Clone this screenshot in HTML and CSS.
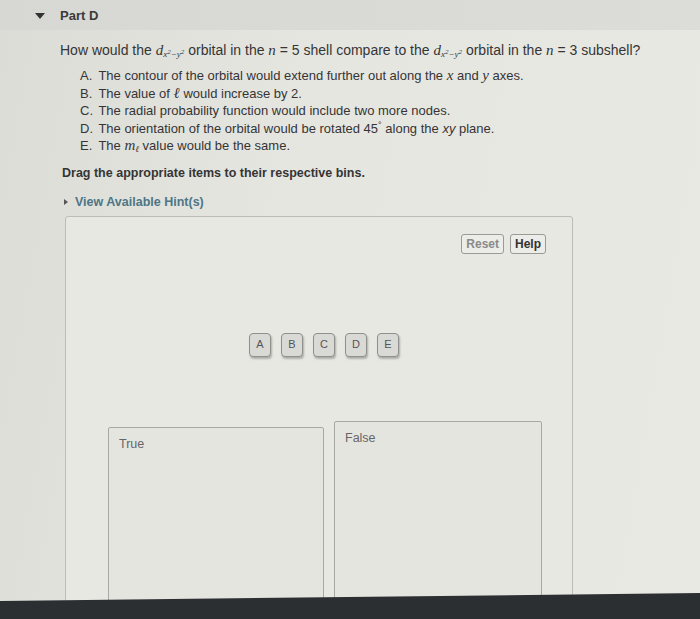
FILE: index.html
```html
<!DOCTYPE html>
<html>
<head>
<meta charset="utf-8">
<link rel="stylesheet" href="styles.css">
</head>
<body>
<div class="screen">
  <div class="header">
    <span class="caret"></span>
    <span class="part">Part D</span>
  </div>
  <div class="content">
    <p class="question">How would the <span class="math">d<sub>x<sup>2</sup>−y<sup>2</sup></sub></span> orbital in the <span class="math">n</span> = 5 shell compare to the <span class="math">d<sub>x<sup>2</sup>−y<sup>2</sup></sub></span> orbital in the <span class="math">n</span> = 3 subshell?</p>
    <ol class="options">
      <li><span class="lbl">A.</span> The contour of the orbital would extend further out along the <span class="math">x</span> and <span class="math">y</span> axes.</li>
      <li><span class="lbl">B.</span> The value of <span class="math">ℓ</span> would increase by 2.</li>
      <li><span class="lbl">C.</span> The radial probability function would include two more nodes.</li>
      <li><span class="lbl">D.</span> The orientation of the orbital would be rotated 45<sup>°</sup> along the <i>xy</i> plane.</li>
      <li><span class="lbl">E.</span> The <span class="math">m<sub>ℓ</sub></span> value would be the same.</li>
    </ol>
    <p class="instr">Drag the appropriate items to their respective bins.</p>
    <p class="hint"><span class="tri"></span>View Available Hint(s)</p>
    <div class="panel">
      <div class="tools">
        <span class="btn reset">Reset</span>
        <span class="btn help">Help</span>
      </div>
      <div class="tiles">
        <span class="tile">A</span>
        <span class="tile">B</span>
        <span class="tile">C</span>
        <span class="tile">D</span>
        <span class="tile">E</span>
      </div>
      <div class="bins">
        <div class="bin bin-true">True</div>
        <div class="bin bin-false">False</div>
      </div>
    </div>
  </div>
  <div class="desk"></div>
</div>
</body>
</html>
```
FILE: styles.css
```css
html, body {
  margin: 0;
  padding: 0;
}
body {
  width: 700px;
  height: 619px;
  overflow: hidden;
  background: #e3e3de;
  font-family: "Liberation Sans", Arial, sans-serif;
  color: #353535;
}
.screen {
  position: relative;
  width: 700px;
  height: 619px;
  background: linear-gradient(100deg, #dcdcd7 0%, #e6e6e1 40%, #e9e9e4 100%);
  overflow: hidden;
}
.header {
  height: 30px;
  background: linear-gradient(90deg, #d7d7d3, #dcdcd8);
  display: flex;
  align-items: center;
  padding-left: 35px;
}
.caret {
  width: 0;
  height: 0;
  border-left: 5px solid transparent;
  border-right: 5px solid transparent;
  border-top: 6px solid #333;
  margin-right: 15px;
  margin-top: 1px;
}
.part {
  font-size: 13px;
  font-weight: bold;
  color: #3a3a3a;
}
.content {
  padding-left: 60px;
}
.question {
  margin: 11px 0 0 0;
  font-size: 14px;
  line-height: 18px;
  height: 18px;
  white-space: nowrap;
}
.math {
  font-family: "Liberation Serif", "DejaVu Serif", serif;
  font-style: italic;
  font-size: 15px;
  line-height: 0;
}
.math sub {
  font-size: 9px;
  line-height: 0;
  vertical-align: -2px;
}
.math sub sup {
  font-size: 7px;
  line-height: 0;
  vertical-align: 3px;
}
.options {
  list-style: none;
  margin: 8px 0 0 20px;
  padding: 0;
  font-size: 13px;
  line-height: 17.5px;
}
.options li {
  height: 17.5px;
  white-space: nowrap;
}
.options sup {
  font-size: 9px;
  line-height: 0;
}
.lbl {
  display: inline-block;
  width: 15px;
}
.instr {
  margin: 10px 0 0 2px;
  font-size: 12.5px;
  line-height: 16px;
  font-weight: bold;
}
.hint {
  margin: 13px 0 0 4px;
  font-size: 12.5px;
  line-height: 16px;
  font-weight: bold;
  color: #4d7686;
  display: flex;
  align-items: center;
}
.tri {
  width: 0;
  height: 0;
  border-top: 3px solid transparent;
  border-bottom: 3px solid transparent;
  border-left: 4px solid #555;
  margin-right: 7px;
}
.panel {
  margin: 6px 0 0 5px;
  width: 506px;
  height: 420px;
  border: 1px solid #bdbdb8;
  border-radius: 3px;
  background: #e8e8e3;
  position: relative;
}
.tools {
  display: flex;
  justify-content: flex-end;
  gap: 6px;
  padding: 17px 26px 0 0;
}
.btn {
  font-size: 12px;
  font-weight: bold;
  padding: 2px 4px;
  border: 1px solid #9a9a96;
  border-radius: 3px;
  background: #ecece8;
  line-height: 14px;
}
.reset {
  color: #8a8a88;
}
.help {
  color: #333;
}
.tiles {
  display: flex;
  gap: 10px;
  margin: 79px 0 0 183px;
}
.tile {
  width: 22px;
  height: 24px;
  border: 1px solid #8f8f8c;
  border-radius: 4px;
  background: #d9d9d5;
  box-shadow: 1px 2px 2px rgba(0,0,0,0.25);
  font-size: 11px;
  color: #555;
  display: flex;
  justify-content: center;
  padding-top: 4px;
  box-sizing: border-box;
}
.bins {
  display: flex;
  gap: 10px;
  margin: 64px 0 0 42px;
  align-items: flex-start;
}
.bin {
  border: 1px solid #a8a8a4;
  border-radius: 2px;
  background: #e5e5e0;
  font-size: 12.5px;
  color: #666;
  box-sizing: border-box;
  padding: 9px 10px;
  height: 200px;
}
.bin-true {
  width: 216px;
  margin-top: 6px;
}
.bin-false {
  width: 208px;
}
.desk {
  position: absolute;
  left: 0;
  right: 0;
  bottom: 0;
  height: 26px;
  background: #2c2f32;
  clip-path: polygon(0 8px, 100% 0, 100% 100%, 0 100%);
}
```
